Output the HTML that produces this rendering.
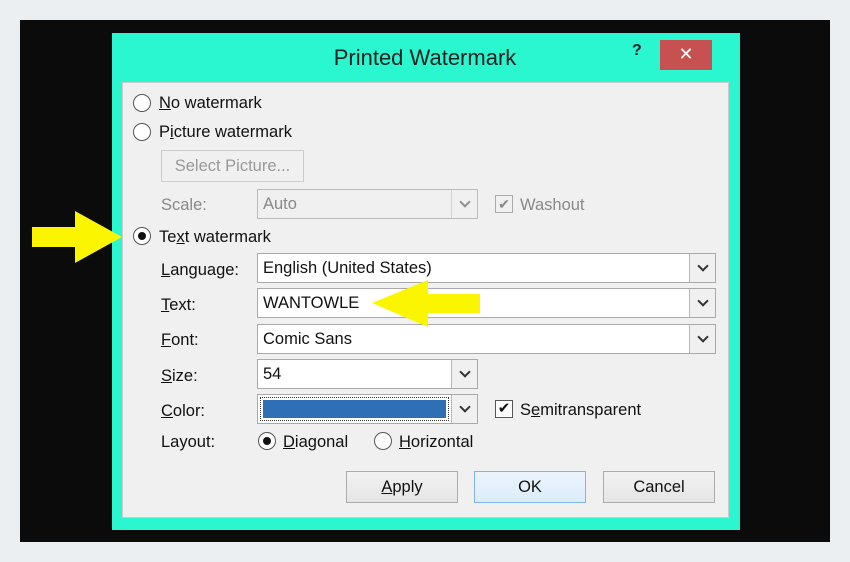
<!DOCTYPE html>
<html><head><style>
*{margin:0;padding:0;box-sizing:border-box}
body{width:850px;height:562px;background:#eceff1;position:relative;overflow:hidden;font-family:"Liberation Sans",sans-serif;font-size:16.5px;color:#111}
.a{position:absolute}
.lbl{position:absolute;white-space:nowrap;line-height:18px}
.radio{position:absolute;width:18px;height:18px;border:1px solid #555;border-radius:50%;background:#fff}
.radio.on::after{content:"";position:absolute;left:4px;top:4px;width:8px;height:8px;border-radius:50%;background:#111}
.combo{position:absolute;background:#fff;border:1px solid #a9a9a9}
.combo .t{position:absolute;left:5px;top:5px;white-space:nowrap}
.combo .dd{position:absolute;right:0;top:0;bottom:0;width:26px;border-left:1px solid #b8b8b8;background:#f0f0f0}
.dd::after{content:"";position:absolute;left:9px;top:8px;width:6px;height:6px;border-right:2px solid #333;border-bottom:2px solid #333;transform:rotate(45deg)}
.btn{position:absolute;height:32px;border:1px solid #acacac;background:linear-gradient(#f2f2f2,#e5e5e5);text-align:center;line-height:30px}
u{text-decoration:underline}
.chk{position:absolute;width:18px;height:18px;border:1px solid #555;background:#fff}
</style></head><body>
<div class="a" style="left:20px;top:20px;width:810px;height:522px;background:#0b0b0b"></div>
<div class="a" style="left:112px;top:33px;width:628px;height:497px;background:#2af7d0"></div>
<div class="lbl" style="left:112px;top:45px;width:626px;text-align:center;font-size:22px;line-height:26px;color:#222">Printed Watermark</div>
<div class="lbl" style="left:632px;top:42px;font-size:16px;font-weight:bold;color:#222">?</div>
<div class="a" style="left:660px;top:40px;width:52px;height:30px;background:#c75050;color:#fff;text-align:center;font-size:18px;line-height:29px">✕</div>
<div class="a" style="left:122px;top:82px;width:607px;height:436px;background:#f0f0f0;border:1px solid #ccc"></div>

<div class="radio" style="left:133px;top:94px"></div><div class="lbl" style="left:159px;top:94px"><u>N</u>o watermark</div>
<div class="radio" style="left:133px;top:123px"></div><div class="lbl" style="left:159px;top:123px">P<u>i</u>cture watermark</div>
<div class="btn" style="left:161px;top:150px;width:143px;color:#999;background:#f0f0f0;border-color:#ccc">Select Picture...</div>
<div class="lbl" style="left:161px;top:196px;color:#888">Scale:</div>
<div class="combo" style="left:257px;top:189px;width:221px;height:30px;background:#f0f0f0;border-color:#bbb"><span class="t" style="color:#888">Auto</span><div class="dd" style="opacity:.5"></div></div>
<div class="chk" style="left:495px;top:195px;border-color:#aaa;background:#f0f0f0;color:#888;font-size:14px;line-height:16px;text-align:center">✔</div>
<div class="lbl" style="left:520px;top:196px;color:#888">Washout</div>
<div class="radio on" style="left:133px;top:227px"></div><div class="lbl" style="left:159px;top:228px">Te<u>x</u>t watermark</div>

<div class="lbl" style="left:161px;top:261px"><u>L</u>anguage:</div>
<div class="combo" style="left:257px;top:253px;width:459px;height:30px"><span class="t">English (United States)</span><div class="dd"></div></div>
<div class="lbl" style="left:161px;top:296px"><u>T</u>ext:</div>
<div class="combo" style="left:257px;top:288px;width:459px;height:30px"><span class="t">WANTOWLE</span><div class="dd"></div></div>
<div class="lbl" style="left:161px;top:331px"><u>F</u>ont:</div>
<div class="combo" style="left:257px;top:324px;width:459px;height:30px"><span class="t">Comic Sans</span><div class="dd"></div></div>
<div class="lbl" style="left:161px;top:367px"><u>S</u>ize:</div>
<div class="combo" style="left:257px;top:359px;width:221px;height:30px"><span class="t">54</span><div class="dd"></div></div>
<div class="lbl" style="left:161px;top:402px"><u>C</u>olor:</div>
<div class="combo" style="left:257px;top:394px;width:221px;height:30px"><div class="a" style="left:2px;top:2px;right:28px;bottom:2px;border:1px dotted #333;padding:2px"><div style="width:100%;height:100%;background:#2e6fb5"></div></div><div class="dd"></div></div>
<div class="chk" style="left:495px;top:400px;font-size:15px;line-height:16px;text-align:center">✔</div>
<div class="lbl" style="left:520px;top:401px">S<u>e</u>mitransparent</div>
<div class="lbl" style="left:161px;top:433px">Layout:</div>
<div class="radio on" style="left:258px;top:432px"></div><div class="lbl" style="left:283px;top:433px"><u>D</u>iagonal</div>
<div class="radio" style="left:374px;top:432px"></div><div class="lbl" style="left:399px;top:433px"><u>H</u>orizontal</div>

<div class="btn" style="left:346px;top:471px;width:112px"><u>A</u>pply</div>
<div class="btn" style="left:474px;top:471px;width:112px;border-color:#7eb4ea;background:linear-gradient(#ecf4fc,#dcecfc)">OK</div>
<div class="btn" style="left:603px;top:471px;width:112px">Cancel</div>

<svg class="a" style="left:0;top:0" width="850" height="562">
<polygon points="32,227 75,227 75,211 122,237 75,263 75,247 32,247" fill="#fbf600"/>
<polygon points="480,294 428,294 428,280 372,303 428,327 428,313 480,313" fill="#fbf600"/>
</svg>
</body></html>
